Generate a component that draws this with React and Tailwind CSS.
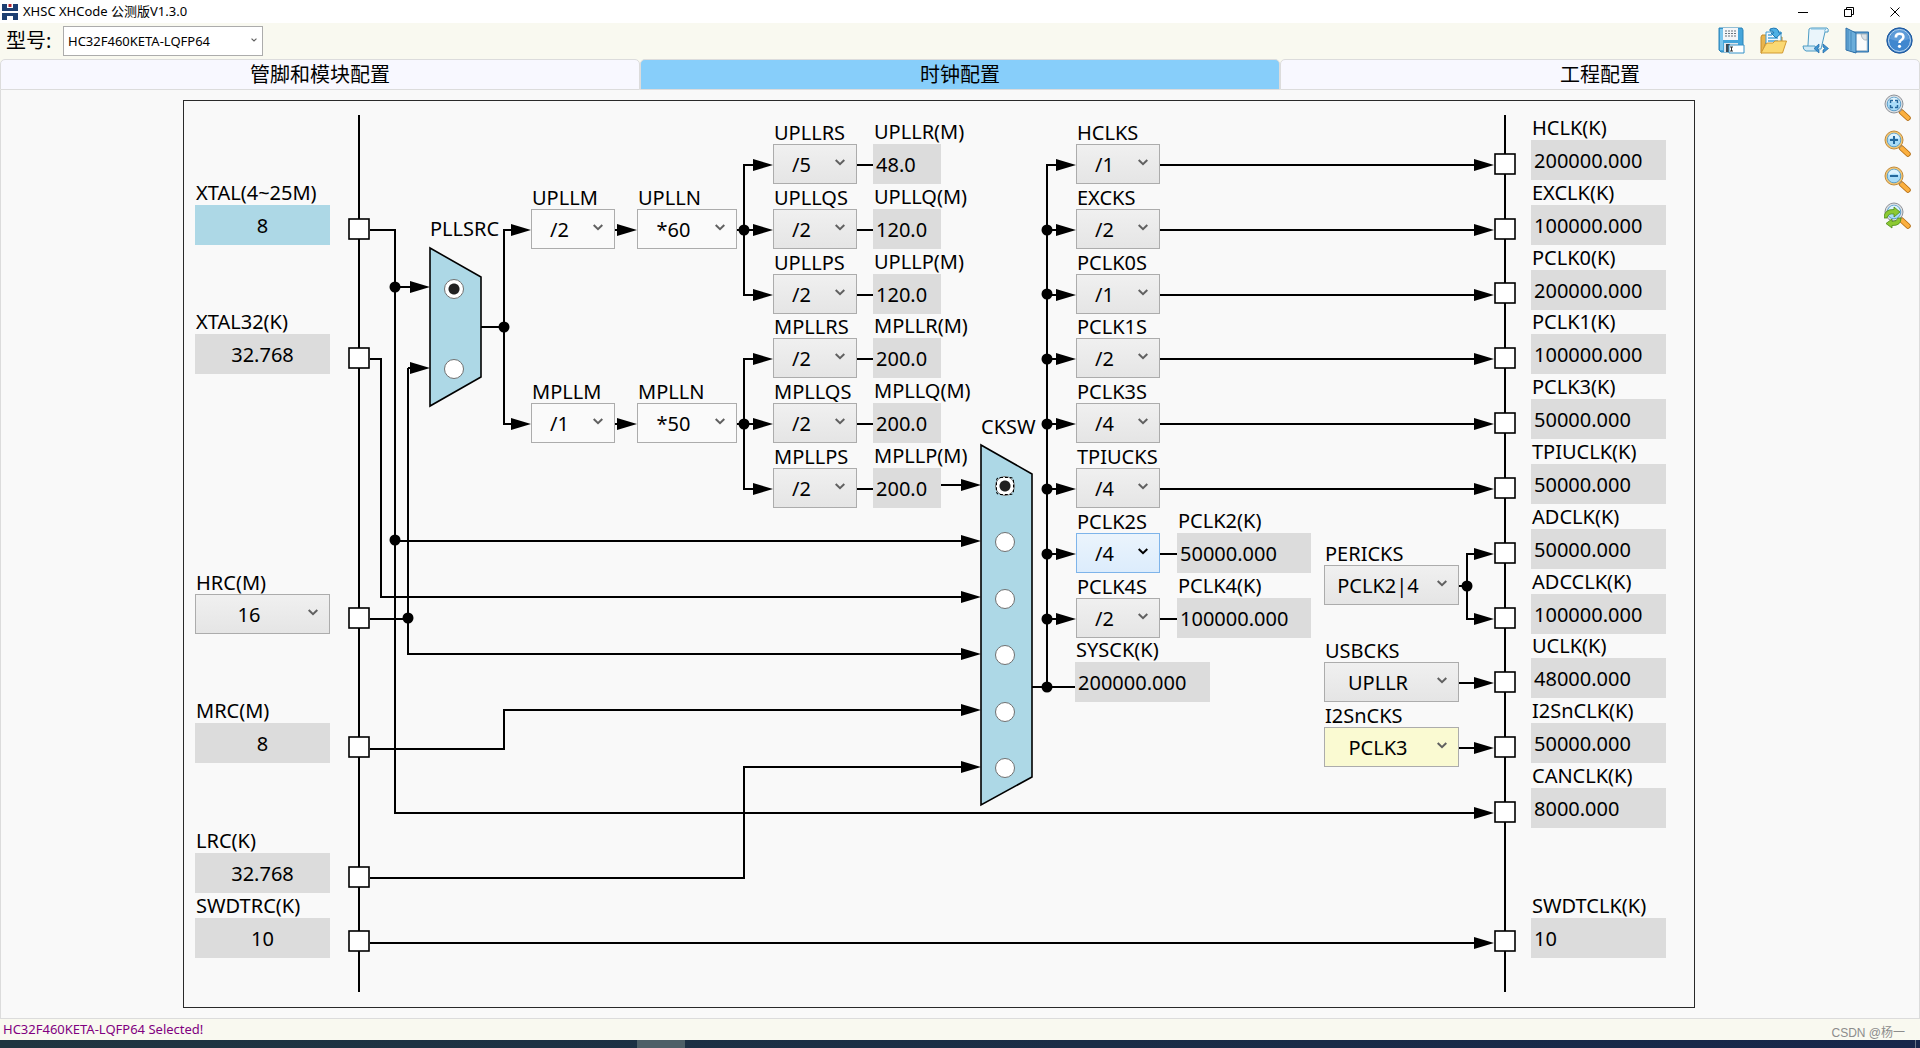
import { useState } from 'react';

const FONT = "font-['Noto_Sans','Noto_Sans_CJK_SC',sans-serif]";

/* Canvas data: every x / y is measured from the diagram's top-left corner. */
const SELECTS = [
  { label: 'HRC(M)', x: 12, y: 494, w: 135, value: '16' },
  { label: 'UPLLM', x: 348, y: 109, w: 84, value: '/2', tone: 'plain' },
  { label: 'UPLLN', x: 454, y: 109, w: 100, value: '*60', tone: 'plain' },
  { label: 'MPLLM', x: 348, y: 303, w: 84, value: '/1', tone: 'plain' },
  { label: 'MPLLN', x: 454, y: 303, w: 100, value: '*50', tone: 'plain' },
  { label: 'UPLLRS', x: 590, y: 44, w: 84, value: '/5' },
  { label: 'UPLLQS', x: 590, y: 109, w: 84, value: '/2' },
  { label: 'UPLLPS', x: 590, y: 174, w: 84, value: '/2' },
  { label: 'MPLLRS', x: 590, y: 238, w: 84, value: '/2' },
  { label: 'MPLLQS', x: 590, y: 303, w: 84, value: '/2' },
  { label: 'MPLLPS', x: 590, y: 368, w: 84, value: '/2' },
  { label: 'HCLKS', x: 893, y: 44, w: 84, value: '/1' },
  { label: 'EXCKS', x: 893, y: 109, w: 84, value: '/2' },
  { label: 'PCLK0S', x: 893, y: 174, w: 84, value: '/1' },
  { label: 'PCLK1S', x: 893, y: 238, w: 84, value: '/2' },
  { label: 'PCLK3S', x: 893, y: 303, w: 84, value: '/4' },
  { label: 'TPIUCKS', x: 893, y: 368, w: 84, value: '/4' },
  { label: 'PCLK2S', x: 893, y: 433, w: 84, value: '/4', tone: 'hover' },
  { label: 'PCLK4S', x: 893, y: 498, w: 84, value: '/2' },
  { label: 'PERICKS', x: 1141, y: 465, w: 135, value: 'PCLK2|4' },
  { label: 'USBCKS', x: 1141, y: 562, w: 135, value: 'UPLLR' },
  { label: 'I2SnCKS', x: 1141, y: 627, w: 135, value: 'PCLK3', tone: 'yellow' },
];

const READOUTS = [
  { label: 'XTAL32(K)', x: 12, y: 234, w: 135, value: '32.768', center: true },
  { label: 'MRC(M)', x: 12, y: 623, w: 135, value: '8', center: true },
  { label: 'LRC(K)', x: 12, y: 753, w: 135, value: '32.768', center: true },
  { label: 'SWDTRC(K)', x: 12, y: 818, w: 135, value: '10', center: true },
  { label: 'UPLLR(M)', x: 690, y: 44, w: 68, value: '48.0' },
  { label: 'UPLLQ(M)', x: 690, y: 109, w: 68, value: '120.0' },
  { label: 'UPLLP(M)', x: 690, y: 174, w: 68, value: '120.0' },
  { label: 'MPLLR(M)', x: 690, y: 238, w: 68, value: '200.0' },
  { label: 'MPLLQ(M)', x: 690, y: 303, w: 68, value: '200.0' },
  { label: 'MPLLP(M)', x: 690, y: 368, w: 68, value: '200.0' },
  { label: 'PCLK2(K)', x: 994, y: 433, w: 134, value: '50000.000' },
  { label: 'PCLK4(K)', x: 994, y: 498, w: 134, value: '100000.000' },
  { label: 'SYSCK(K)', x: 892, y: 562, w: 135, value: '200000.000' },
  { label: 'HCLK(K)', x: 1348, y: 40, w: 135, value: '200000.000' },
  { label: 'EXCLK(K)', x: 1348, y: 105, w: 135, value: '100000.000' },
  { label: 'PCLK0(K)', x: 1348, y: 170, w: 135, value: '200000.000' },
  { label: 'PCLK1(K)', x: 1348, y: 234, w: 135, value: '100000.000' },
  { label: 'PCLK3(K)', x: 1348, y: 299, w: 135, value: '50000.000' },
  { label: 'TPIUCLK(K)', x: 1348, y: 364, w: 135, value: '50000.000' },
  { label: 'ADCLK(K)', x: 1348, y: 429, w: 135, value: '50000.000' },
  { label: 'ADCCLK(K)', x: 1348, y: 494, w: 135, value: '100000.000' },
  { label: 'UCLK(K)', x: 1348, y: 558, w: 135, value: '48000.000' },
  { label: 'I2SnCLK(K)', x: 1348, y: 623, w: 135, value: '50000.000' },
  { label: 'CANCLK(K)', x: 1348, y: 688, w: 135, value: '8000.000' },
  { label: 'SWDTCLK(K)', x: 1348, y: 818, w: 135, value: '10' },
];

const MUXES = [
  { name: 'PLLSRC', x: 247, labelY: 117, radioX: 271, radios: [189, 269] },
  { name: 'CKSW', x: 798, labelY: 315, radioX: 822, radios: [386, 442, 499, 555, 612, 668], focus: true },
];

const ROWS = [65, 130, 195, 259, 324, 389];

const LINES = [
  'M176 15V892', 'M1322 15V892',
  'M187 130H212V713', 'M187 259H198V497', 'M187 519H225', 'M225 268V554',
  'M298 227H321', 'M321 130V324',
  'M554 130H561', 'M561 65V195', 'M554 324H561', 'M561 259V389',
  ...ROWS.map((y) => `M674 ${y}H690`),
  'M849 587H892', 'M864 65V587',
  'M977 454H994', 'M977 519H994',
  'M1276 486H1284', 'M1284 454V519',
];

/* [start x, y, tip x] */
const ARROWS = [
  [212, 187, 247], [225, 268, 247],
  [320, 130, 348], [320, 324, 348], [432, 130, 454], [432, 324, 454],
  ...ROWS.map((y) => [560, y, 590]),
  [758, 385, 798], [212, 441, 798], [197, 497, 798], [224, 554, 798],
  [321, 610, 798], [561, 667, 798],
  ...[...ROWS, 454, 519].map((y) => [863, y, 893]),
  ...ROWS.map((y) => [977, y, 1311]),
  [1283, 454, 1311], [1283, 519, 1311], [1276, 583, 1311], [1276, 648, 1311],
  [211, 713, 1311], [187, 843, 1311],
];

const ELBOWS = ['M187 649H321V609', 'M187 778H561V666'];

const DOTS = [
  [212, 187], [212, 440], [225, 518], [321, 227], [561, 130], [561, 324],
  [864, 130], [864, 194], [864, 259], [864, 324], [864, 389], [864, 454], [864, 519], [864, 587],
  [1284, 486],
];

const PORTS = [
  ...[129, 258, 518, 647, 777, 841].map((y) => [176, y]),
  ...[64, 129, 193, 258, 323, 388, 453, 518, 582, 647, 712, 841].map((y) => [1322, y]),
];

const TONES = {
  normal: 'border-[#acacac] bg-linear-to-b from-[#f0f0f0] to-[#e5e5e5]',
  plain: 'border-[#acacac] bg-[#fafafa]',
  hover: 'border-[#7eb4ea] bg-linear-to-b from-[#ebf4fc] to-[#dcecfc]',
  yellow: 'border-[#acacac] bg-[#fafad2]',
};

function Chevron({ className }) {
  return (
    <svg viewBox="0 0 10 7" className={className} fill="none" stroke="currentColor" strokeWidth="2" aria-hidden="true">
      <path d="M0.7 1l4.3 4.2L9.3 1" />
    </svg>
  );
}

function SelectNode({ label, x, y, w, value, tone = 'normal' }) {
  return (
    <label className="absolute block" style={{ left: x, top: y - 22, width: w }}>
      <span className="block pl-px leading-[22px] whitespace-nowrap">{label}</span>
      <span className="relative block">
        <select
          defaultValue={value}
          className={`block h-10 w-full appearance-none border pt-px pr-[27px] text-center [text-align-last:center] ${TONES[tone]}`}
        >
          <option>{value}</option>
        </select>
        <Chevron
          className={`pointer-events-none absolute top-[15px] right-3 h-[7px] w-[10px] ${tone === 'hover' ? 'text-black' : 'text-[#606060]'}`}
        />
      </span>
    </label>
  );
}

function ReadoutNode({ label, x, y, w, value, center }) {
  return (
    <div className="absolute" style={{ left: x, top: y - 24, width: w }}>
      <div className="pl-px leading-6 whitespace-nowrap">{label}</div>
      <output
        aria-label={label}
        className={`block h-10 bg-[#dcdcdc] leading-[41px] ${center ? 'text-center' : 'pl-[3px]'}`}
      >
        {value}
      </output>
    </div>
  );
}

function Mux({ name, x, labelY, radioX, radios, focus }) {
  return (
    <fieldset>
      <legend className="absolute leading-6" style={{ left: x, top: labelY }}>{name}</legend>
      {radios.map((y, i) => (
        <input
          key={y}
          type="radio"
          name={name}
          aria-label={`${name} ${i + 1}`}
          defaultChecked={i === 0}
          className="absolute size-5 -translate-1/2 appearance-none rounded-full border border-[#707070] bg-white checked:bg-[radial-gradient(circle,#212121_0_5px,white_6px)]"
          style={{ left: radioX, top: y }}
        />
      ))}
      {focus && (
        <span
          className="pointer-events-none absolute size-[18px] -translate-1/2 rounded-[4px] border border-dashed border-black"
          style={{ left: radioX, top: radios[0] }}
        />
      )}
    </fieldset>
  );
}

function Wires() {
  return (
    <svg viewBox="0 0 1512 908" className="absolute inset-0 size-full" fill="none" stroke="black" strokeWidth="2" aria-hidden="true">
      {LINES.map((d) => <path key={d} d={d} />)}
      {ELBOWS.map((d) => <path key={d} d={d} />)}
      {ARROWS.map(([x, y, tip]) => (
        <g key={`${x}-${y}`}>
          <path d={`M${x} ${y}H${tip - 10}`} />
          <path d={`M${tip} ${y}l-20-6v12z`} fill="black" stroke="none" />
        </g>
      ))}
      {DOTS.map(([x, y]) => <circle key={`${x}-${y}`} cx={x} cy={y} r="5.5" fill="black" stroke="none" />)}
      {PORTS.map(([x, y]) => (
        <rect key={`${x}-${y}`} x={x - 10} y={y - 10} width="20" height="20" fill="white" strokeWidth="1.6" />
      ))}
      <g fill="#add8e6" strokeWidth="1.6">
        <path d="M247 148l51 29v100l-51 29z" />
        <path d="M798 345l51 29v303l-51 28z" />
      </g>
    </svg>
  );
}

function SaveIcon() {
  return (
    <svg viewBox="0 0 27 27" className="size-[27px]" aria-hidden="true">
      <path d="M1 1h23l1 2v22H3l-2-2z" fill="#45a5da" stroke="#2a83b8" />
      <path d="M2 2h3v21H2z" fill="#7cc6ec" />
      <path d="M5 1h15v12H5z" fill="#f4f6f8" />
      <path d="M7 4h11M7 6.500h11M7 9h11" stroke="#68737d" strokeDasharray="2 1" />
      <path d="M6 16h14v9H6z" fill="#dfe5ea" />
      <path d="M8 17h4v8H8z" fill="#3d4851" />
      <path d="M11 18h15v8H11z" fill="#fff" stroke="#3592c9" />
      <path d="M12 20h3m-1.500 0v4M12 24h3" stroke="#333" fill="none" />
    </svg>
  );
}

function FolderIcon() {
  return (
    <svg viewBox="0 0 27 27" className="size-[27px]" aria-hidden="true">
      <path d="M1 10l1-2h5l2 2h13v5H6L2 26H1z" fill="#e9b44c" stroke="#c58b28" />
      <path d="M6 5h15v12H6z" fill="#f3f9fd" stroke="#3f9ed6" />
      <path d="M8 8h4M8 11h10M8 14h10" stroke="#74b9e2" strokeWidth="2" />
      <path d="M1 26l5-9q1-1 2-1h5l2-2h11.500l-4 12z" fill="#fbd973" stroke="#d19a33" />
      <path d="M10 2q8-3 9 4h2.500l-5.500 5-5-5h3q-1-3-4-2z" fill="#4fb0e4" stroke="#1e78b4" />
    </svg>
  );
}

function ScriptIcon() {
  return (
    <svg viewBox="0 0 27 27" className="size-[27px]" aria-hidden="true">
      <path d="M7 2q1-1 3-1h15q2 1 1 4h-3l-4 17H3q3 0 3-4z" fill="#eaf5fb" stroke="#4d9cc4" />
      <path d="M9 2h15q-2 1-1 3" fill="none" stroke="#79bbdc" />
      <path d="M1 19h12l2 5H4q-3-1-3-5z" fill="#cfe8f4" stroke="#4d9cc4" />
      <path d="M17 17l-5 4.500 5 4.500v-3l-2-1.500 2-1.500zM21 17l5.500 4.500-5.500 4.500v-3l2-1.500-2-1.500z" fill="#3f95d3" stroke="#1c67a5" strokeWidth=".7" />
    </svg>
  );
}

function BookIcon() {
  return (
    <svg viewBox="0 0 27 27" className="size-[27px]" aria-hidden="true">
      <path d="M9 5h15.500v20H9z" fill="#5b9fd2" stroke="#2c6fa8" />
      <path d="M11 7h12v16.500H11z" fill="#fbfbfb" stroke="#b8c3cc" strokeWidth=".7" />
      <path d="M17 7h6v6q-5 1-6-6z" fill="#dbe2e7" stroke="#8c9aa5" strokeWidth=".6" />
      <path d="M2 1l10 5v20l-10-3z" fill="#6badda" stroke="#2c6fa8" />
      <path d="M4 3v20M7 4.500v19" stroke="#4488bd" />
    </svg>
  );
}

function HelpIcon() {
  return (
    <svg viewBox="0 0 27 27" className="size-[27px]" aria-hidden="true">
      <circle cx="13.5" cy="13.5" r="12.7" fill="#3074bd" stroke="#1d569b" />
      <circle cx="13.500" cy="13.500" r="11" fill="#4087cf" stroke="#c3dcf2" />
      <path d="M4 12a9.500 9.500 0 0 1 19 0q-9 4-19 0z" fill="#79b0e2" opacity=".5" />
      <path d="M9.800 10.500q0-3.700 3.800-3.700t3.800 3.200q0 1.800-2 3t-1.900 3" fill="none" stroke="#fff" strokeWidth="2.600" />
      <circle cx="13.500" cy="19.300" r="1.600" fill="#fff" />
    </svg>
  );
}

function Magnifier({ rim, children, over }) {
  return (
    <svg viewBox="0 0 27 27" className="size-[27px]" aria-hidden="true">
      <path d="M17.500 18l6.500 6" stroke="#b46d12" strokeWidth="5.500" strokeLinecap="round" />
      <path d="M17.500 18l6.500 6" stroke="#fbb040" strokeWidth="3.800" strokeLinecap="round" />
      <path d="M14 14l3 3" stroke="#8d8d8d" strokeWidth="3" />
      <circle cx="10" cy="10" r="9" fill={rim === 'gold' ? '#f3c775' : '#dde0e4'} stroke={rim === 'gold' ? '#c18a3a' : '#8e9298'} />
      <circle cx="10" cy="10" r="6.800" fill="#a9dcf8" stroke="#5c9fcb" />
      <path d="M4.500 9a5.500 5.500 0 0 1 11 0q-5-3-11 0z" fill="#def2fd" />
      {children && <g fill="none" stroke="#24689d" strokeWidth="2">{children}</g>}
      {over}
    </svg>
  );
}

const TOOLS = [
  ['保存', SaveIcon], ['打开', FolderIcon], ['生成代码', ScriptIcon], ['手册', BookIcon], ['帮助', HelpIcon],
];

const ZOOMS = [
  ['适应窗口', <Magnifier key="fit" rim="silver"><path d="M6.500 9V6.500H9M11 6.500h2.500V9M13.500 11v2.500H11M9 13.500H6.500V11" strokeWidth="1.500" /></Magnifier>],
  ['放大', <Magnifier key="in" rim="gold"><path d="M10 6v8M6 10h8" /></Magnifier>],
  ['缩小', <Magnifier key="out" rim="gold"><path d="M6 10h8" /></Magnifier>],
  ['重置', (
    <Magnifier
      key="reset"
      rim="silver"
      over={(
        <g fill="#8cc932" stroke="#4b8a14" strokeWidth=".8">
          <path d="M0 16q0-9 10-8.500V5l6 5-6 5v-3q-6-1-7 4z" />
          <path d="M17 16q0 8-9 7.500V26l-6-4.500L8 17v2.500q5 0 6-3.500z" />
        </g>
      )}
    />
  )],
];

const TABS = ['管脚和模块配置', '时钟配置', '工程配置'];

export default function App() {
  const [tab, setTab] = useState(1);

  return (
    <div className={`flex min-h-screen min-w-fit flex-col bg-[#f9f9f0] text-black ${FONT}`}>
      <header className="flex h-[23px] items-center bg-white pl-0.5">
        <svg viewBox="0 0 16 16" className="size-4" aria-hidden="true">
          <path d="M0 0h5v4h6V0h5v7H0zM0 9h16v7h-5v-4H5v4H0z" fill="#1d3f72" />
          <path d="M6.500 0h3v3h-3z" fill="#b3202c" />
        </svg>
        <h1 className="flex-1 pl-[5px] text-[13px] leading-[23px]">XHSC XHCode 公测版V1.3.0</h1>
        <div className="flex pr-0.5">
          {[
            ['最小化', 'M0 5.500h10'],
            ['还原', 'M0.500 2.500h7v7h-7zM2.500 2.500v-2h7v7h-2'],
            ['关闭', 'M0.500 0.500l9 9M9.500 0.500l-9 9'],
          ].map(([name, d]) => (
            <button key={name} type="button" aria-label={name} className="flex h-[21px] w-[46px] items-center justify-center">
              <svg viewBox="0 0 10 10" className="size-[10px]" fill="none" stroke="black"><path d={d} /></svg>
            </button>
          ))}
        </div>
      </header>

      <div className="flex h-9 items-center justify-between pr-[7px] pl-1.5">
        <label className="flex items-center gap-[11px] text-[20px]">
          <span className="w-[46px] whitespace-nowrap">型号:</span>
          <span className="relative block">
            <select defaultValue="HC32F460KETA-LQFP64" className="block h-[30px] w-[200px] appearance-none border border-[#acacac] bg-white pt-px pl-1 text-[13px]">
              <option>HC32F460KETA-LQFP64</option>
            </select>
            <Chevron className="pointer-events-none absolute top-3 right-1.5 h-1 w-1.5 text-[#606060]" />
          </span>
        </label>
        <div className="flex gap-[15px] pb-0.5">
          {TOOLS.map(([name, Icon]) => (
            <button key={name} type="button" aria-label={name}><Icon /></button>
          ))}
        </div>
      </div>

      <div role="tablist" className="grid h-[31px] grid-cols-3">
        {TABS.map((name, i) => (
          <button
            key={name}
            type="button"
            role="tab"
            aria-selected={tab === i}
            onClick={() => setTab(i)}
            className={`rounded-t-[5px] border border-[#dcdcdc] pt-px text-[20px] leading-7 ${tab === i ? 'bg-[#87cefa]' : 'bg-[#f8f8ff]'}`}
          >
            {name}
          </button>
        ))}
      </div>

      <main className="flex flex-1 border-x border-b border-[#dcdcdc] bg-[#f9f9f9] pt-2.5 pb-2.5">
        <div className="flex flex-1 justify-center">
          <section
            aria-label="时钟树"
            className="relative h-[908px] w-[1512px] shrink-0 text-[20px] outline-1 -outline-offset-1 outline-[#2a2a2a]"
          >
            <Wires />
            <label className="absolute block" style={{ left: 12, top: 81, width: 135 }}>
              <span className="block pl-px leading-6 whitespace-nowrap">XTAL(4~25M)</span>
              <input type="text" defaultValue="8" className="block h-10 w-full bg-[#add8e6] text-center" />
            </label>
            {READOUTS.map((n) => <ReadoutNode key={n.label} {...n} />)}
            {SELECTS.map((n) => <SelectNode key={n.label} {...n} />)}
            {MUXES.map((m) => <Mux key={m.name} {...m} />)}
          </section>
        </div>
        <div className="-mt-1.5 flex w-[42px] flex-col items-center gap-[9px] pr-0.5">
          {ZOOMS.map(([name, icon]) => (
            <button key={name} type="button" aria-label={name}>{icon}</button>
          ))}
        </div>
      </main>

      <footer>
        <div className="flex h-[21px] items-center justify-between pr-[15px] pl-[3px]">
          <p className="text-[13px] leading-[21px] text-[#800080]">HC32F460KETA-LQFP64 Selected!</p>
          <p className="pt-1.5 font-['Liberation_Sans','Noto_Sans_CJK_SC',sans-serif] text-[12px] leading-4 text-[#8c8c8c]">CSDN @杨一</p>
        </div>
        <div className="flex h-2 overflow-hidden bg-linear-to-r from-[#1f3540] to-[#17264a]">
          <div className="w-[637px]" />
          <div className="w-12 bg-[#4d5f67]" />
          <div className="flex-1 pt-1 pr-[86px] text-right text-[13px] leading-4 text-white">8:58</div>
          <div className="mr-1 w-px bg-[#6b7688]" />
        </div>
      </footer>
    </div>
  );
}
